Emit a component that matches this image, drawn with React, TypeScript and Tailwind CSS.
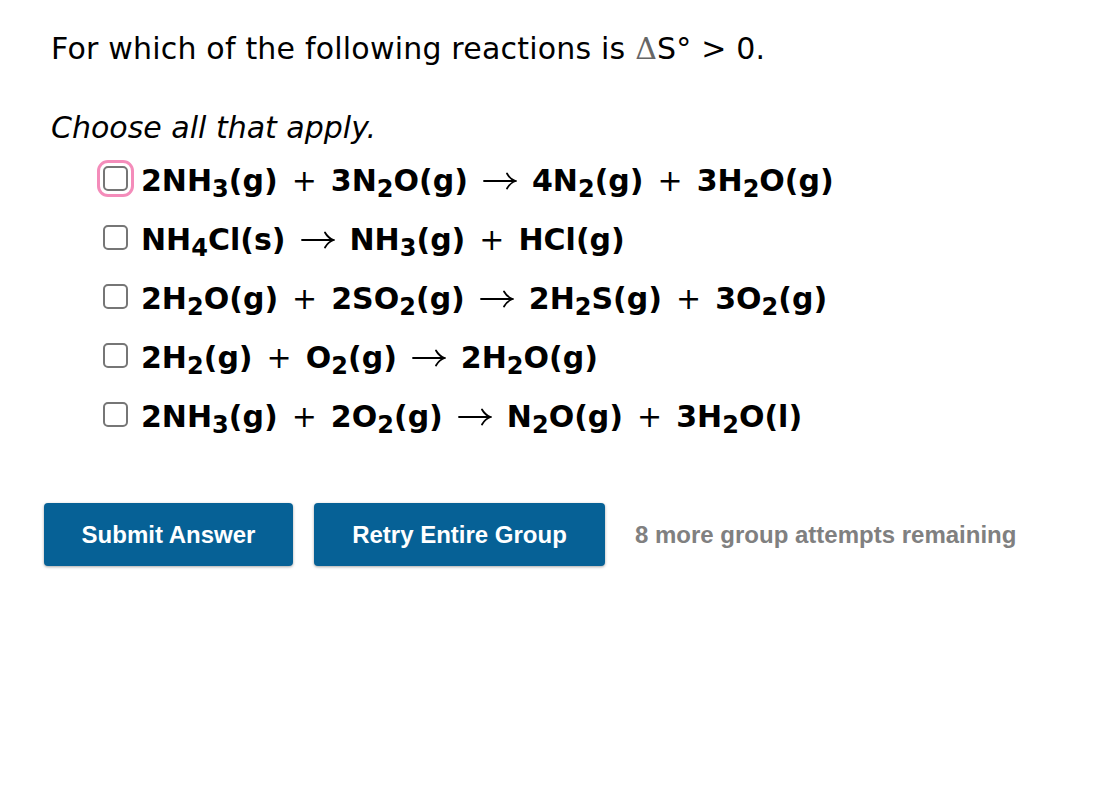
import React from "react";

// long thin math arrow, like the MathJax one in the source page
const Arrow = () => (
  <svg
    width="34"
    height="18"
    viewBox="0 0 34 18"
    className="inline-block mx-[15px] relative top-[-1px]"
    fill="none"
    stroke="#000"
    strokeWidth="1.8"
    strokeLinecap="round"
  >
    <path d="M1 9 H32" />
    <path d="M24 1.5 Q27 7 32.5 9 Q27 11 24 16.5" />
  </svg>
);

const Plus = () => <span className="font-normal mx-[14px]">+</span>;

const Sub = ({ children }: { children: React.ReactNode }) => (
  <sub className="text-[0.8em]">{children}</sub>
);

const options: React.ReactNode[] = [
  <>
    2NH<Sub>3</Sub>(g)<Plus />3N<Sub>2</Sub>O(g)<Arrow />4N<Sub>2</Sub>(g)<Plus />3H<Sub>2</Sub>O(g)
  </>,
  <>
    NH<Sub>4</Sub>Cl(s)<Arrow />NH<Sub>3</Sub>(g)<Plus />HCl(g)
  </>,
  <>
    2H<Sub>2</Sub>O(g)<Plus />2SO<Sub>2</Sub>(g)<Arrow />2H<Sub>2</Sub>S(g)<Plus />3O<Sub>2</Sub>(g)
  </>,
  <>
    2H<Sub>2</Sub>(g)<Plus />O<Sub>2</Sub>(g)<Arrow />2H<Sub>2</Sub>O(g)
  </>,
  <>
    2NH<Sub>3</Sub>(g)<Plus />2O<Sub>2</Sub>(g)<Arrow />N<Sub>2</Sub>O(g)<Plus />3H<Sub>2</Sub>O(l)
  </>,
];

export default function App() {
  return (
    <div
      className="w-[1094px] h-[794px] bg-white text-black pl-[51px] pt-[29px]"
      style={{ fontFamily: "'DejaVu Sans', Verdana, sans-serif" }}
    >
      <p className="text-[30px] leading-[40px] tracking-[0.2px] whitespace-nowrap">
        For which of the following reactions is{" "}
        <span className="text-[#666]" style={{ fontFamily: "'DejaVu Serif', serif" }}>
          Δ
        </span>
        S° &gt; 0.
      </p>

      <p className="italic text-[30px] leading-[40px] mt-[39px]">Choose all that apply.</p>

      <div className="flex flex-col ml-[52px] mt-[3px]">
        {options.map((opt, i) => (
          <label key={i} className="flex items-center h-[59px]">
            <span
              className={`w-[25px] h-[25px] mb-[5px] rounded-[5px] border-2 border-[#767676] bg-white shrink-0 ${
                i === 0 ? "outline-[3px] outline-solid outline-[#f48cba] outline-offset-[3px]" : ""
              }`}
            />
            <span className="font-bold text-[30px] leading-[40px] ml-[13px] whitespace-nowrap">
              {opt}
            </span>
          </label>
        ))}
      </div>

      <div
        className="flex items-center mt-[57px] -ml-[7px]"
        style={{ fontFamily: "'Liberation Sans', Arial, sans-serif" }}
      >
        <button className="w-[249px] h-[63px] rounded-[4px] bg-[#066196] text-white font-bold text-[24px] shadow-[0_1px_3px_rgba(0,0,0,0.35)]">
          Submit Answer
        </button>
        <button className="w-[291px] h-[63px] ml-[21px] rounded-[4px] bg-[#066196] text-white font-bold text-[24px] shadow-[0_1px_3px_rgba(0,0,0,0.35)]">
          Retry Entire Group
        </button>
        <span className="ml-[30px] font-bold text-[24px] text-[#808080] whitespace-nowrap">
          8 more group attempts remaining
        </span>
      </div>
    </div>
  );
}
